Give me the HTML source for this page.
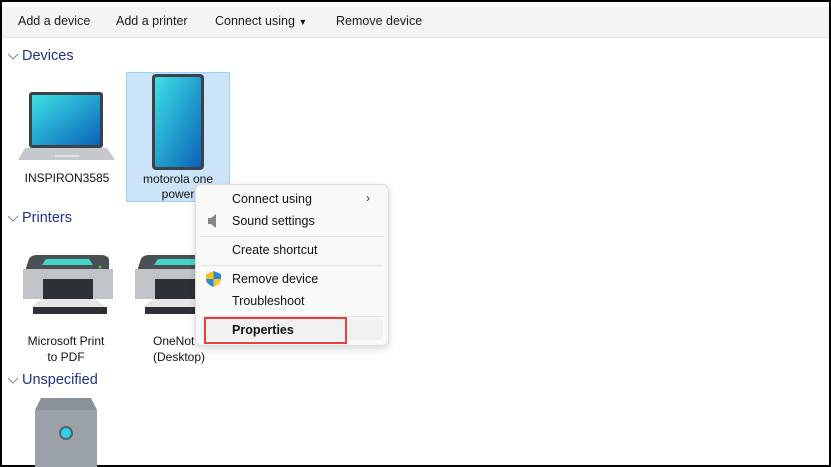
<!DOCTYPE html>
<html><head><style>
body{margin:0;width:831px;height:467px;overflow:hidden;background:#fff;font-family:"Liberation Sans",sans-serif;position:relative}
.frame{position:absolute;left:0;top:0;width:827px;height:463px;border:2px solid #000}
.tb{position:absolute;left:2px;top:7px;width:827px;height:30px;background:#f3f4f6;border-bottom:1px solid #e3e3e3}
.tb span{position:absolute;top:7px;font-size:12.5px;color:#1a1a1a}
.sec{position:absolute;left:22px;font-size:14.5px;color:#1e3287}
.chev{position:absolute;left:7px}
.lbl{position:absolute;font-size:12px;color:#111;text-align:center}
.menu{position:absolute;left:195px;top:184px;width:192px;height:160px;background:#f9f9f9;border:1px solid #ddd;border-radius:6px;box-shadow:0 3px 8px rgba(0,0,0,.15)}
.mi{position:absolute;left:36px;font-size:12.5px;color:#111}
.sep{position:absolute;left:5px;width:182px;height:1px;background:#e0e0e0}
</style></head><body>
<div class="frame"></div>
<div class="tb">
<span style="left:16px">Add a device</span>
<span style="left:114px">Add a printer</span>
<span style="left:213px">Connect using <span style="position:static;font-size:9px">▼</span></span>
<span style="left:334px">Remove device</span>
</div>
<svg class="chev" style="top:53px" width="12" height="8"><path d="M1 1 L6 6 L11 1" fill="none" stroke="#888" stroke-width="1"/></svg>
<div class="sec" style="top:48px">Devices</div>
<svg class="chev" style="top:215px" width="12" height="8"><path d="M1 1 L6 6 L11 1" fill="none" stroke="#888" stroke-width="1"/></svg>
<div class="sec" style="top:210px">Printers</div>
<svg class="chev" style="top:377px" width="12" height="8"><path d="M1 1 L6 6 L11 1" fill="none" stroke="#888" stroke-width="1"/></svg>
<div class="sec" style="top:372px">Unspecified</div>

<svg style="position:absolute;left:17px;top:90px" width="100" height="72">
<defs><linearGradient id="g" x1="0" y1="0" x2="1" y2="1"><stop offset="0" stop-color="#3ee0e6"/><stop offset="1" stop-color="#0a62b8"/></linearGradient></defs>
<rect x="12" y="2" width="74" height="56" rx="3" fill="#3d4248"/>
<rect x="15" y="5" width="68" height="50" fill="url(#g)"/>
<path d="M8 58 H90 L98 70 H1 Z" fill="#c5c9ce"/>
<rect x="38" y="65" width="24" height="2" fill="#e3e5e8"/>
</svg>
<div class="lbl" style="left:17px;top:171px;width:100px">INSPIRON3585</div>

<div style="position:absolute;left:126px;top:72px;width:104px;height:130px;background:#cce4f7;border:1px solid #99d1ff;box-sizing:border-box"></div>
<svg style="position:absolute;left:150px;top:74px" width="56" height="96">
<rect x="2" y="0" width="52" height="96" rx="4" fill="#3d4248"/>
<rect x="5" y="3" width="46" height="90" rx="2" fill="url(#g)"/>
</svg>
<div class="lbl" style="left:126px;top:172px;width:104px;line-height:15px">motorola one<br>power</div>

<svg style="position:absolute;left:23px;top:255px" width="90" height="60">
<path d="M6 4 Q8 0 14 0 H78 Q84 0 86 4 V16 H2 Z" fill="#4a4f55"/>
<path d="M23 4 H66 L70 10 H19 Z" fill="#41d6c5"/>
<circle cx="77" cy="12" r="1.5" fill="#3c3"/>
<rect x="0" y="14" width="90" height="30" fill="#bfc4c9"/>
<rect x="20" y="24" width="50" height="20" fill="#2d3135"/>
<path d="M18 44 H72 L83 52 H8Z" fill="#e6e6e6"/>
<rect x="10" y="52" width="74" height="7" fill="#2d3135"/>
</svg>
<div class="lbl" style="left:16px;top:333px;width:100px;line-height:16px">Microsoft Print<br>to PDF</div>
<svg style="position:absolute;left:135px;top:255px" width="60" height="60">
<path d="M6 4 Q8 0 14 0 H60 V16 H2 Z" fill="#4a4f55"/>
<path d="M23 4 H60 V10 H19 Z" fill="#41d6c5"/>
<rect x="0" y="14" width="60" height="30" fill="#bfc4c9"/>
<rect x="20" y="24" width="40" height="20" fill="#2d3135"/>
<path d="M18 44 H60 V52 H8Z" fill="#e6e6e6"/>
<rect x="10" y="52" width="50" height="7" fill="#2d3135"/>
</svg>
<div class="lbl" style="left:153px;top:333px;width:60px;line-height:16px;text-align:left">OneNot<br>(Desktop)</div>

<svg style="position:absolute;left:35px;top:398px" width="62" height="69">
<path d="M6 0 H56 L62 12 V69 H0 V12 Z" fill="#8a9299"/>
<rect x="0" y="12" width="62" height="57" fill="#9aa1a8"/>
<circle cx="31" cy="35" r="6" fill="#2ad4e8" stroke="#5a6268" stroke-width="2"/>
</svg>

<div class="menu">
<div class="mi" style="top:7px">Connect using</div><div style="position:absolute;left:170px;top:6px;font-size:12px;color:#333">›</div>
<svg style="position:absolute;left:11px;top:29px" width="12" height="14"><path d="M1 4 H4 L9 0 V14 L4 10 H1Z" fill="#888"/></svg>
<div class="mi" style="top:29px">Sound settings</div>
<div class="sep" style="top:51px"></div>
<div class="mi" style="top:58px">Create shortcut</div>
<div class="sep" style="top:80px"></div>
<svg style="position:absolute;left:10px;top:86px" width="15" height="16"><path d="M7.5 0 L15 3 V8 Q15 13 7.5 16 Q0 13 0 8 V3Z" fill="#f7c325"/><path d="M7.5 0 L15 3 V8 H7.5Z" fill="#2a8ad8"/><path d="M0 8 H7.5 V16 Q0 13 0 8Z" fill="#2a8ad8"/></svg>
<div class="mi" style="top:87px">Remove device</div>
<div class="mi" style="top:109px">Troubleshoot</div>
<div class="sep" style="top:131px"></div>
<div style="position:absolute;left:5px;top:134px;width:182px;height:21px;background:#f0f0f0;border-radius:4px"></div>
<div style="position:absolute;left:8px;top:132px;width:143px;height:27px;border:2px solid #e8413c;box-sizing:border-box"></div>
<div class="mi" style="top:138px;font-weight:bold">Properties</div>
</div>
</body></html>
